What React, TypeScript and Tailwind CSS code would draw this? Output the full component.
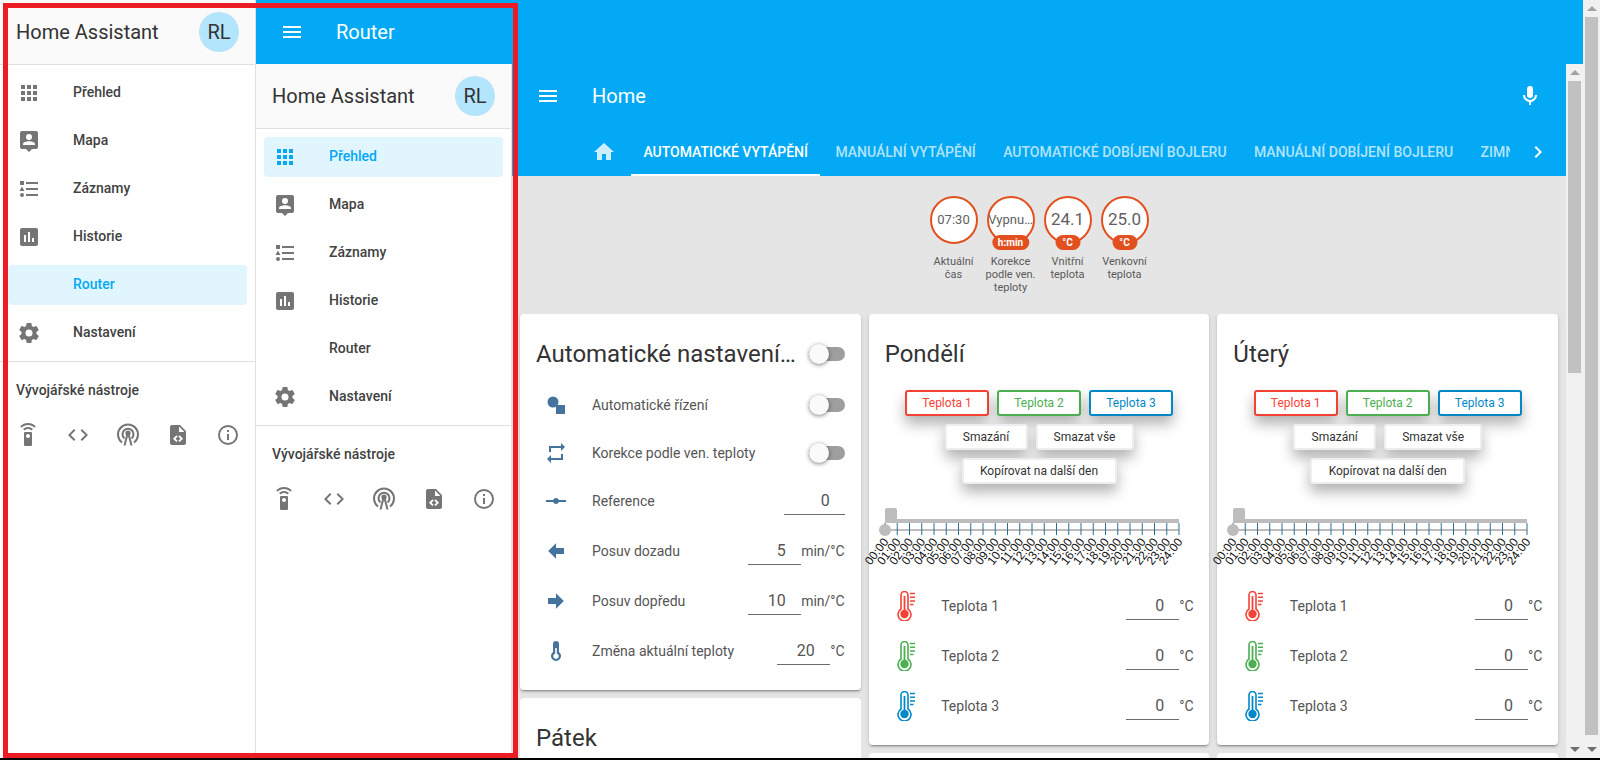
const menuPath = "M3,6H21V8H3V6M3,11H21V13H3V11M3,16H21V18H3V16Z";
const appsPath = "M16,20H20V16H16M16,14H20V10H16M10,8H14V4H10M16,8H20V4H16M10,14H14V10H10M4,14H8V10H4M4,20H8V16H4M10,20H14V16H10M4,8H8V4H4V8Z";
const listPath = "M5,9.5L7.5,14H2.5L5,9.5M3,4H7V8H3V4M5,20A2,2 0 0,0 7,18A2,2 0 0,0 5,16A2,2 0 0,0 3,18A2,2 0 0,0 5,20M9,5V7H21V5H9M9,19H21V17H9V19M9,13H21V11H9V13Z";
const chartPath = "M19 3H5C3.9 3 3 3.9 3 5V19C3 20.1 3.9 21 5 21H19C20.1 21 21 20.1 21 19V5C21 3.9 20.1 3 19 3M9 17H7V10H9V17M13 17H11V7H13V17M17 17H15V13H17V17Z";
const cogPath = "M12,15.5A3.5,3.5 0 0,1 8.5,12A3.5,3.5 0 0,1 12,8.5A3.5,3.5 0 0,1 15.5,12A3.5,3.5 0 0,1 12,15.5M19.43,12.97C19.47,12.65 19.5,12.33 19.5,12C19.5,11.67 19.47,11.34 19.43,11L21.54,9.37C21.73,9.22 21.78,8.95 21.66,8.73L19.66,5.27C19.54,5.05 19.27,4.96 19.05,5.05L16.56,6.05C16.04,5.66 15.5,5.32 14.87,5.07L14.5,2.42C14.46,2.18 14.25,2 14,2H10C9.75,2 9.54,2.18 9.5,2.42L9.13,5.07C8.5,5.32 7.96,5.66 7.44,6.05L4.95,5.05C4.73,4.96 4.46,5.05 4.34,5.27L2.34,8.73C2.21,8.95 2.27,9.22 2.46,9.37L4.57,11C4.53,11.34 4.5,11.67 4.5,12C4.5,12.33 4.53,12.65 4.57,12.97L2.46,14.63C2.27,14.78 2.21,15.05 2.34,15.27L4.34,18.73C4.46,18.95 4.73,19.03 4.95,18.95L7.44,17.94C7.96,18.34 8.5,18.68 9.13,18.93L9.5,21.58C9.54,21.82 9.75,22 10,22H14C14.25,22 14.46,21.82 14.5,21.58L14.87,18.93C15.5,18.67 16.04,18.34 16.56,17.94L19.05,18.95C19.27,19.03 19.54,18.95 19.66,18.73L21.66,15.27C21.78,15.05 21.73,14.78 21.54,14.63L19.43,12.97Z";
const remotePath = "M12,0C8.96,0 6.21,1.23 4.22,3.22L5.63,4.63C7.26,3 9.5,2 12,2C14.5,2 16.74,3 18.36,4.64L19.77,3.23C17.79,1.23 15.04,0 12,0M7.05,6.05L8.46,7.46C9.37,6.56 10.62,6 12,6C13.38,6 14.63,6.56 15.54,7.46L16.95,6.05C15.68,4.78 13.93,4 12,4C10.07,4 8.32,4.78 7.05,6.05M12,15A2,2 0 0,1 10,13A2,2 0 0,1 12,11A2,2 0 0,1 14,13A2,2 0 0,1 12,15M15,9H9A1,1 0 0,0 8,10V22A1,1 0 0,0 9,23H15A1,1 0 0,0 16,22V10A1,1 0 0,0 15,9Z";
const codePath = "M14.6,16.6L19.2,12L14.6,7.4L16,6L22,12L16,18L14.6,16.6M9.4,16.6L4.8,12L9.4,7.4L8,6L2,12L8,18L9.4,16.6Z";
const fileCodePath = "M14 2H6C4.9 2 4 2.9 4 4V20C4 21.1 4.9 22 6 22H18C19.1 22 20 21.1 20 20V8L14 2M9.54 15.65L11.63 17.74L10.35 19L7 15.65L10.35 12.3L11.63 13.56L9.54 15.65M17 15.65L13.65 19L12.38 17.74L14.47 15.65L12.38 13.56L13.65 12.3L17 15.65M13 9V3.5L18.5 9H13Z";
const infoPath = "M11,9H13V7H11M12,20C7.59,20 4,16.41 4,12C4,7.59 7.59,4 12,4C16.41,4 20,7.59 20,12C20,16.41 16.41,20 12,20M12,2A10,10 0 0,0 2,12A10,10 0 0,0 12,22A10,10 0 0,0 22,12A10,10 0 0,0 12,2M11,17H13V11H11V17Z";
const homePath = "M10,20V14H14V20H19V12H22L12,3L2,12H5V20H10Z";
const micPath = "M12,2A3,3 0 0,1 15,5V11A3,3 0 0,1 12,14A3,3 0 0,1 9,11V5A3,3 0 0,1 12,2M19,11C19,14.53 16.39,17.44 13,17.93V21H11V17.93C7.61,17.44 5,14.53 5,11H7A5,5 0 0,0 12,16A5,5 0 0,0 17,11H19Z";
const chevronPath = "M8.59,16.58L13.17,12L8.59,7.41L10,6L16,12L10,18L8.59,16.58Z";
const repeatPath = "M17,17H7V14L3,18L7,22V19H19V13H17M7,7H17V10L21,6L17,2V5H5V11H7V7Z";
const vertexPath = "M2,11H9.17C9.58,9.83 10.69,9 12,9C13.31,9 14.42,9.83 14.83,11H22V13H14.83C14.42,14.17 13.31,15 12,15C10.69,15 9.58,14.17 9.17,13H2V11Z";
const arrowLeftPath = "M20,9V15H12V19.84L4.16,12L12,4.16V9H20Z";
const arrowRightPath = "M4,15V9H12V4.16L19.84,12L12,19.84V15H4Z";

const Icon = ({ d, className }: { d: string; className?: string }) => (
  <svg viewBox="0 0 24 24" fill="currentColor" className={"w-6 h-6 shrink-0 " + (className ?? "")}>
    <path d={d} />
  </svg>
);

const MapIcon = () => (
  <svg viewBox="0 0 24 24" fill="currentColor" className="w-6 h-6 shrink-0">
    <path
      fillRule="evenodd"
      d="M5 2H19A2 2 0 0 1 21 4V18A2 2 0 0 1 19 20H15L12 23L9 20H5A2 2 0 0 1 3 18V4A2 2 0 0 1 5 2ZM12 5A3 3 0 1 0 12 11A3 3 0 1 0 12 5ZM6 16H18V15C18 13.2 14.5 12.2 12 12.2S6 13.2 6 15Z"
    />
  </svg>
);

const TowerIcon = () => (
  <svg viewBox="0 0 24 24" fill="none" stroke="currentColor" strokeWidth="2" className="w-6 h-6 shrink-0">
    <path d="M6 19.5A10 10 0 1 1 18 19.5" />
    <path d="M8.5 15.5A5.5 5.5 0 1 1 15.5 15.5" />
    <path d="M12 9L8.5 22.5M12 9L15.5 22.5" />
    <circle cx="12" cy="10" r="1.6" fill="currentColor" />
  </svg>
);

const ShapesIcon = () => (
  <svg viewBox="0 0 24 24" fill="currentColor" className="w-6 h-6 shrink-0">
    <circle cx="9" cy="9" r="5.5" />
    <rect x="12" y="12" width="9" height="9" />
  </svg>
);

const OutlineThermometer = () => (
  <svg viewBox="0 0 24 24" fill="currentColor" className="w-6 h-6 shrink-0">
    <path
      fillRule="evenodd"
      d="M15 13V5A3 3 0 0 0 9 5V13A5 5 0 1 0 15 13ZM11.2 9H12.8V14.6A2.7 2.7 0 1 1 11.2 14.6Z"
    />
  </svg>
);

const LineThermometer = ({ color }: { color: string }) => (
  <svg viewBox="0 0 24 30" fill="none" stroke={color} className="w-6 h-[30px] shrink-0">
    <path strokeWidth="1.6" d="M4 18V4A3.5 3.5 0 0 1 11 4V18A6.5 6.5 0 1 1 4 18Z" />
    <circle cx="7.5" cy="23" r="4.2" fill={color} stroke="none" />
    <path strokeWidth="1.8" d="M7.5 5V20" />
    <path strokeWidth="1.5" d="M13 2.5H18M13 6.2H18M13 9.9H18M13 13.6H16.5" />
  </svg>
);

const Scrollbar = ({ thumb }: { thumb: string }) => (
  <div className="w-[17px] bg-[#f1f1f1] flex flex-col items-center shrink-0">
    <div className="h-[17px] flex items-center justify-center">
      <div className="w-0 h-0 border-x-[5px] border-x-transparent border-b-[5px] border-b-[#a3a3a3]" />
    </div>
    <div className={"w-[13px] bg-[#c1c1c1] " + thumb} />
    <div className="h-[17px] mt-auto flex items-center justify-center">
      <div className="w-0 h-0 border-x-[5px] border-x-transparent border-t-[5px] border-t-[#6f6f6f]" />
    </div>
  </div>
);

const navItems = [
  { label: "Přehled", icon: <Icon d={appsPath} /> },
  { label: "Mapa", icon: <MapIcon /> },
  { label: "Záznamy", icon: <Icon d={listPath} /> },
  { label: "Historie", icon: <Icon d={chartPath} /> },
  { label: "Router", icon: <div className="w-6 h-6 shrink-0" /> },
  { label: "Nastavení", icon: <Icon d={cogPath} /> },
];

const Sidebar = ({ active }: { active: string }) => (
  <div className="w-64 h-full shrink-0 bg-white border-r border-[#e0e0e0] flex flex-col">
    <div className="h-[65px] bg-[#fafafa] border-b border-[#e0e0e0] flex items-center justify-between pl-4 pr-[16px] shrink-0">
      <span className="text-[20px] text-[#333333]">Home Assistant</span>
      <div className="w-10 h-10 rounded-full bg-[#b3e5fc] text-[20px] text-[#333333] flex items-center justify-center">
        RL
      </div>
    </div>
    <div className="pt-2 flex flex-col gap-2 pb-2 border-b border-[#e0e0e0]">
      {navItems.map((item) => (
        <div
          key={item.label}
          className={
            "mx-2 h-10 rounded pl-[9px] flex items-center gap-8 text-sm font-medium " +
            (item.label === active ? "bg-[#e1f5fe] text-[#03a9f4]" : "text-[#424242]")
          }
        >
          <span className={item.label === active ? "text-[#03a9f4]" : "text-[#757575]"}>{item.icon}</span>
          <span className="pb-[2px]">{item.label}</span>
        </div>
      ))}
    </div>
    <div className="h-14 px-4 flex items-center text-sm font-medium text-[#424242]">Vývojářské nástroje</div>
    <div className="mt-[5px] pl-4 flex gap-[26px] text-[#757575]">
      <Icon d={remotePath} />
      <Icon d={codePath} />
      <TowerIcon />
      <Icon d={fileCodePath} />
      <Icon d={infoPath} />
    </div>
  </div>
);

const chips = [
  { value: "07:30", small: true, label: ["Aktuální", "čas"] },
  { value: "Vypnu…", small: true, unit: "h:min", label: ["Korekce", "podle ven.", "teploty"] },
  { value: "24.1", unit: "°C", label: ["Vnitřní", "teplota"] },
  { value: "25.0", unit: "°C", label: ["Venkovní", "teplota"] },
];

const Chip = ({ chip }: { chip: (typeof chips)[number] }) => (
  <div className="w-[57px] flex flex-col items-center">
    <div className="relative w-12 h-12 rounded-full bg-white border-2 border-[#e2501f] flex items-center justify-center text-[#5f5f5f]">
      <span className={chip.small ? "text-[13px] whitespace-nowrap" : "text-[17px]"}>{chip.value}</span>
      {chip.unit && (
        <span className="absolute left-1/2 -translate-x-1/2 top-[37px] h-[15px] min-w-[25px] px-[6px] rounded-full bg-[#e2501f] text-white text-[10px] font-bold leading-[15px] text-center whitespace-nowrap">
          {chip.unit}
        </span>
      )}
    </div>
    <div className="mt-[11px] text-[11px] leading-[13px] text-[#5a5a5a] text-center whitespace-nowrap">
      {chip.label.map((line) => (
        <div key={line}>{line}</div>
      ))}
    </div>
  </div>
);

const Toggle = () => (
  <div className="relative w-9 h-[14px] rounded-full bg-[#9e9e9e] shrink-0">
    <div className="absolute left-0 -top-[3px] w-5 h-5 rounded-full bg-[#fafafa] shadow-[0_1px_4px_rgba(0,0,0,0.5)]" />
  </div>
);

const ValueInput = ({ value, width }: { value: string; width: string }) => (
  <div className={"h-[27px] border-b border-[#6b6b6b] pr-[15px] text-right text-base leading-[26px] text-[#555555] shrink-0 " + width}>
    {value}
  </div>
);

const SettingRow = ({
  icon,
  label,
  height,
  children,
}: {
  icon: React.ReactNode;
  label: string;
  height: string;
  children: React.ReactNode;
}) => (
  <div className={"flex items-center pl-2 " + height}>
    <span className="text-[#44739e]">{icon}</span>
    <span className="ml-6 text-sm text-[#555555] flex-1 whitespace-nowrap">{label}</span>
    {children}
  </div>
);

const Unit = ({ text }: { text: string }) => <span className="text-sm text-[#555555] w-[44px] text-right shrink-0">{text}</span>;

const SettingsCard = () => (
  <div className="h-[376px] shrink-0 bg-white rounded shadow-[0_2px_2px_rgba(0,0,0,0.14),0_1px_5px_rgba(0,0,0,0.12),0_3px_1px_-2px_rgba(0,0,0,0.2)] px-4">
    <div className="h-[67px] pt-6 flex items-start justify-between">
      <span className="text-2xl leading-8 text-[#333333] whitespace-nowrap">Automatické nastavení…</span>
      <div className="mt-[9px]">
        <Toggle />
      </div>
    </div>
    <SettingRow icon={<ShapesIcon />} label="Automatické řízení" height="h-12">
      <Toggle />
    </SettingRow>
    <SettingRow icon={<Icon d={repeatPath} />} label="Korekce podle ven. teploty" height="h-[47px]">
      <Toggle />
    </SettingRow>
    <SettingRow icon={<Icon d={vertexPath} />} label="Reference" height="h-[50px]">
      <ValueInput value="0" width="w-[61px]" />
    </SettingRow>
    <SettingRow icon={<Icon d={arrowLeftPath} />} label="Posuv dozadu" height="h-[50px]">
      <ValueInput value="5" width="w-[53px]" />
      <Unit text="min/°C" />
    </SettingRow>
    <SettingRow icon={<Icon d={arrowRightPath} />} label="Posuv dopředu" height="h-[50px]">
      <ValueInput value="10" width="w-[53px]" />
      <Unit text="min/°C" />
    </SettingRow>
    <SettingRow icon={<OutlineThermometer />} label="Změna aktuální teploty" height="h-[50px]">
      <ValueInput value="20" width="w-[53px]" />
      <span className="text-sm text-[#555555] w-[15px] text-right shrink-0">°C</span>
    </SettingRow>
  </div>
);

const hours = Array.from({ length: 25 }, (_, i) => String(i).padStart(2, "0") + ":00");

const Timeline = () => (
  <svg viewBox="0 0 341 81" className="w-[341px] h-[81px] -ml-4 mt-4 shrink-0 overflow-visible">
    <rect x="16" y="8" width="12" height="13" rx="2" fill="#bdbdbd" />
    <rect x="16" y="19" width="294" height="4" fill="#bdbdbd" />
    <rect x="16" y="29" width="294" height="2" fill="#bdbdbd" />
    {hours.map((h, i) => (
      <line key={h} x1={16 + 12.25 * i} x2={16 + 12.25 * i} y1="23" y2="35" stroke="#2a6f97" strokeWidth="1" />
    ))}
    <circle cx="16" cy="30" r="6" fill="#bdbdbd" />
    {hours.map((h, i) => (
      <text
        key={h}
        x={20 + 12.25 * i}
        y="42"
        fontSize="12"
        textAnchor="end"
        fill="#111111"
        fontFamily="Liberation Sans, sans-serif"
        transform={`rotate(-52 ${20 + 12.25 * i} 42)`}
      >
        {h}
      </text>
    ))}
  </svg>
);

const temps = [
  { label: "Teplota 1", color: "#f44336" },
  { label: "Teplota 2", color: "#4caf50" },
  { label: "Teplota 3", color: "#0288c7" },
];

const plainButton = "h-[26px] rounded-[3px] border-2 border-[#eeeeee] bg-white text-xs text-[#333333] flex items-center justify-center shadow-[0_8px_14px_rgba(0,0,0,0.3)]";

const DayCard = ({ title }: { title: string }) => (
  <div className="h-[431px] shrink-0 bg-white rounded shadow-[0_2px_2px_rgba(0,0,0,0.14),0_1px_5px_rgba(0,0,0,0.12),0_3px_1px_-2px_rgba(0,0,0,0.2)] px-4 flex flex-col">
    <div className="h-[68px] pt-6 text-2xl leading-8 text-[#333333] shrink-0">{title}</div>
    <div className="pt-2 flex flex-col items-center gap-2 shrink-0">
      <div className="flex gap-2">
        {temps.map((t) => (
          <div
            key={t.label}
            className={
              "w-[84px] h-[26px] rounded-[3px] border-2 bg-white text-xs flex items-center justify-center shadow-[0_8px_14px_rgba(0,0,0,0.3)] " +
              (t.color === "#f44336"
                ? "border-[#f44336] text-[#f44336]"
                : t.color === "#4caf50"
                  ? "border-[#4caf50] text-[#4caf50]"
                  : "border-[#0288c7] text-[#0288c7]")
            }
          >
            {t.label}
          </div>
        ))}
      </div>
      <div className="flex gap-2">
        <div className={plainButton + " w-[83px]"}>Smazání</div>
        <div className={plainButton + " w-[98px]"}>Smazat vše</div>
      </div>
      <div className={plainButton + " w-[155px]"}>Kopírovat na další den</div>
    </div>
    <Timeline />
    {temps.map((t) => (
      <div key={t.label} className="h-[50px] flex items-center shrink-0">
        <div className="ml-3">
          <LineThermometer color={t.color} />
        </div>
        <span className="ml-[20.5px] text-sm text-[#555555] flex-1">{t.label}</span>
        <ValueInput value="0" width="w-[53px]" />
        <span className="text-sm text-[#555555] w-[14px] text-right shrink-0">°C</span>
      </div>
    ))}
  </div>
);

const PlainCard = ({ title }: { title?: string }) => (
  <div className="h-[120px] shrink-0 bg-white rounded px-4 pt-6 text-2xl leading-8 text-[#333333]">{title}</div>
);

const tabs = ["MANUÁLNÍ VYTÁPĚNÍ", "AUTOMATICKÉ DOBÍJENÍ BOJLERU", "MANUÁLNÍ DOBÍJENÍ BOJLERU", "ZIMNÍ VYTÁPĚNÍ"];

const Main = () => (
  <div className="flex-1 min-w-0 flex flex-col bg-[#e5e5e5]">
    <div className="h-16 bg-[#03a9f4] text-white flex items-center pl-6 pr-6 shrink-0">
      <Icon d={menuPath} />
      <span className="ml-8 text-[20px]">Home</span>
      <Icon d={micPath} className="ml-auto" />
    </div>
    <div className="h-12 bg-[#03a9f4] flex items-center pl-20 shrink-0">
      <div className="w-[918px] h-12 flex items-center gap-[27.4px] overflow-hidden shrink-0">
        <Icon d={homePath} className="text-white/80" />
        <div className="relative h-12 flex items-center text-sm font-medium text-white whitespace-nowrap shrink-0">
          AUTOMATICKÉ VYTÁPĚNÍ
          <div className="absolute -left-3 -right-3 bottom-0 h-[2px] bg-white" />
        </div>
        {tabs.map((tab) => (
          <div key={tab} className="text-sm font-medium text-white/70 whitespace-nowrap shrink-0">
            {tab}
          </div>
        ))}
      </div>
      <Icon d={chevronPath} className="ml-4 text-white" />
    </div>
    <div className="h-[138px] pt-5 flex justify-center items-start shrink-0">
      {chips.map((chip) => (
        <Chip key={chip.value} chip={chip} />
      ))}
    </div>
    <div className="flex-1 min-h-0 overflow-hidden px-2 flex gap-2">
      <div className="flex-1 min-w-0 flex flex-col gap-2">
        <SettingsCard />
        <PlainCard title="Pátek" />
      </div>
      <div className="flex-1 min-w-0 flex flex-col gap-2">
        <DayCard title="Pondělí" />
        <PlainCard />
      </div>
      <div className="flex-1 min-w-0 flex flex-col gap-2">
        <DayCard title="Úterý" />
        <PlainCard />
      </div>
    </div>
  </div>
);

export default function App() {
  return (
    <div className="relative w-[1600px] h-[760px] overflow-hidden flex flex-col font-[Roboto,sans-serif] bg-white">
      <div className="h-[758px] flex shrink-0">
        <Sidebar active="Router" />
        <div className="flex-1 min-w-0 flex flex-col">
          <div className="h-16 bg-[#03a9f4] text-white flex items-center pl-6 shrink-0">
            <Icon d={menuPath} />
            <span className="ml-8 text-[20px]">Router</span>
          </div>
          <div className="flex-1 min-h-0 flex">
            <Sidebar active="Přehled" />
            <Main />
            <Scrollbar thumb="h-[292px]" />
          </div>
        </div>
        <Scrollbar thumb="h-[718px]" />
      </div>
      <div className="h-[2px] bg-black shrink-0" />
      {/* red annotation frame drawn over the screenshot */}
      <div className="absolute left-[3px] top-[3px] w-[515px] h-[755px] border-[5px] border-[#ed1c24] pointer-events-none" />
    </div>
  );
}
